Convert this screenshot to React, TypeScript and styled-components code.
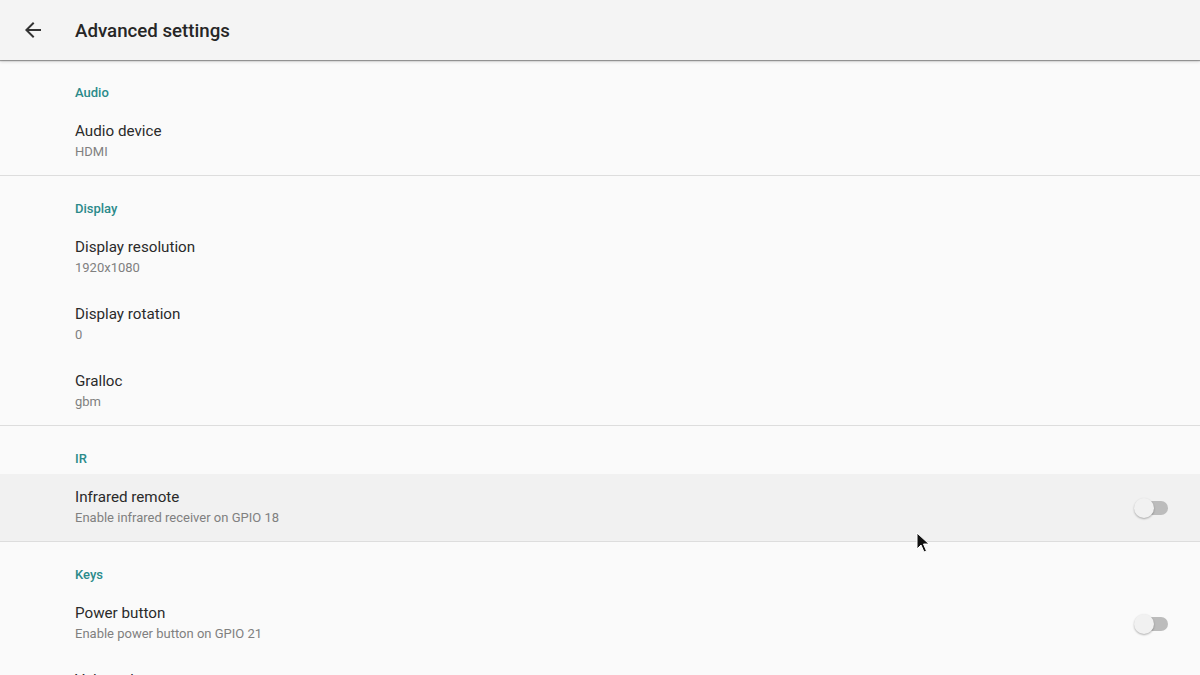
import React from "react";
import styled, { createGlobalStyle } from "styled-components";

const Global = createGlobalStyle`
  html, body { margin: 0; padding: 0; background: #fafafa; }
  body { font-family: Roboto, "Noto Sans", sans-serif; overflow: hidden; }
  * { box-sizing: border-box; }
`;

const Page = styled.div`
  position: relative;
  width: 1200px;
  height: 675px;
  overflow: hidden;
  background: #fafafa;
  display: flex;
  flex-direction: column;
`;

const Toolbar = styled.header`
  height: 60px;
  flex: 0 0 60px;
  display: flex;
  align-items: center;
  background: #f4f4f4;
  box-shadow: 0 1px 1px rgba(0,0,0,0.35), 0 2px 3px rgba(0,0,0,0.12);
  position: relative;
  z-index: 2;
`;

const BackButton = styled.div`
  width: 24px;
  height: 24px;
  margin-left: 21px;
  display: flex;
  align-items: center;
  justify-content: center;
  color: #333;
`;

const Title = styled.h1`
  margin: 2px 0 0 30px;
  font-size: 18.7px;
  font-weight: 500;
  color: #262626;
`;

const List = styled.div`
  display: flex;
  flex-direction: column;
`;

const Category = styled.div`
  height: 48px;
  padding: 25px 0 0 75px;
  font-size: 13px;
  font-weight: 500;
  color: #2b8a8a;
  line-height: 16px;
`;

const Row = styled.div<{ $active?: boolean }>`
  height: 67px;
  display: flex;
  align-items: center;
  padding: 0 30px 0 75px;
  background: ${(p) => (p.$active ? "#f1f1f1" : "transparent")};
`;

const Texts = styled.div`
  flex: 1;
  display: flex;
  flex-direction: column;
  gap: 3px;
  margin-top: -1px;
`;

const ItemTitle = styled.div`
  font-size: 15.2px;
  color: #2a2a2a;
  line-height: 19px;
`;

const Summary = styled.div`
  font-size: 13px;
  color: #808080;
  line-height: 16px;
`;

const Divider = styled.div`
  height: 1px;
  background: #dddddd;
`;

const SwitchBox = styled.div`
  position: relative;
  width: 34px;
  height: 20px;
  margin-right: 2px;
`;

const Track = styled.div`
  position: absolute;
  left: 2px;
  right: 0;
  top: 3px;
  height: 14px;
  border-radius: 7px;
  background: #bcbcbc;
`;

const Thumb = styled.div`
  position: absolute;
  left: 0;
  top: 0;
  width: 20px;
  height: 20px;
  border-radius: 50%;
  background: #f1f1f1;
  box-shadow: 0 1px 2px rgba(0,0,0,0.3);
`;

const Cursor = styled.svg`
  position: absolute;
  left: 916px;
  top: 532px;
  z-index: 5;
`;

const Switch = () => (
  <SwitchBox>
    <Track />
    <Thumb />
  </SwitchBox>
);

type Item = { title: string; summary: string; toggle?: boolean; active?: boolean };
type Section = { name: string; items: Item[] };

const sections: Section[] = [
  { name: "Audio", items: [{ title: "Audio device", summary: "HDMI" }] },
  {
    name: "Display",
    items: [
      { title: "Display resolution", summary: "1920x1080" },
      { title: "Display rotation", summary: "0" },
      { title: "Gralloc", summary: "gbm" },
    ],
  },
  {
    name: "IR",
    items: [
      { title: "Infrared remote", summary: "Enable infrared receiver on GPIO 18", toggle: true, active: true },
    ],
  },
  {
    name: "Keys",
    items: [
      { title: "Power button", summary: "Enable power button on GPIO 21", toggle: true },
      { title: "Volume keys", summary: "Enable volume keys", toggle: true },
    ],
  },
];

export default function App() {
  return (
    <Page>
      <Global />
      <Toolbar>
        <BackButton>
          <svg width="24" height="24" viewBox="0 0 24 24">
            <path d="M20 11H7.83l5.59-5.59L12 4l-8 8 8 8 1.41-1.41L7.83 13H20v-2z" fill="#333" />
          </svg>
        </BackButton>
        <Title>Advanced settings</Title>
      </Toolbar>
      <List>
        {sections.map((s, i) => (
          <React.Fragment key={s.name}>
            {i > 0 && <Divider />}
            <Category>{s.name}</Category>
            {s.items.map((it) => (
              <Row key={it.title} $active={it.active}>
                <Texts>
                  <ItemTitle>{it.title}</ItemTitle>
                  <Summary>{it.summary}</Summary>
                </Texts>
                {it.toggle && <Switch />}
              </Row>
            ))}
          </React.Fragment>
        ))}
      </List>
      <Cursor width="14" height="22" viewBox="0 0 14 22">
        <path d="M1 1 L1 17 L5 13 L8 20 L10.5 19 L7.5 12 L13 12 Z" fill="#111" stroke="#fff" strokeWidth="1" />
      </Cursor>
    </Page>
  );
}
